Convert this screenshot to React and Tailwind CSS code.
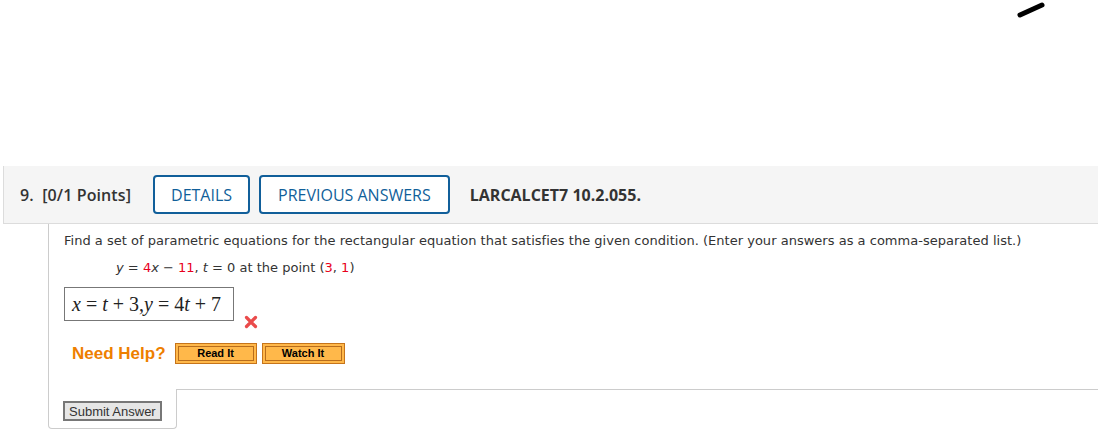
import React from 'react';

function RedX() {
    return (
        <svg width="14" height="14" viewBox="0 0 14 14" className="block">
            <path d="M2.5 2.5 L11.5 11.5 M11.5 2.5 L2.5 11.5" stroke="#ea4b4b" strokeWidth="3.2" strokeLinecap="round" />
        </svg>
    );
}

export default function App() {
    const red = 'text-[#e8001c]';
    return (
        <div className="relative w-[1098px] h-[439px] overflow-hidden bg-white">
            <svg className="absolute left-[1012px] top-0" width="40" height="22" viewBox="0 0 40 22">
                <path d="M8 15 L30 5" stroke="#000" strokeWidth="5" strokeLinecap="round" />
            </svg>

            <div className="h-[166px]"></div>

            <div className="ml-[3px] h-[58px] bg-[#f5f5f5] border-l border-b border-[#dcdcdc] flex items-center gap-[9px] pl-[16px] font-['Open_Sans',sans-serif] text-[16px]">
                <div className="font-semibold text-[#333] mr-[13px] whitespace-nowrap tracking-[0.1px]">
                    9.&nbsp; [0/1 Points]
                </div>
                <button className="h-[39px] px-[16px] border-2 border-[#115f9a] rounded-[4px] text-[#115f9a] bg-white font-medium">
                    DETAILS
                </button>
                <button className="h-[39px] px-[17px] border-2 border-[#115f9a] rounded-[4px] text-[#115f9a] bg-white font-medium">
                    PREVIOUS ANSWERS
                </button>
                <div className="ml-[11px] font-bold text-[#333] whitespace-nowrap">LARCALCET7 10.2.055.</div>
            </div>

            <div className="ml-[48px]">
                <div className="border-l border-[#cccccc] pl-[15px] pt-[9px] pb-[22px] font-['DejaVu_Sans',Verdana,sans-serif] text-[13px] text-[#333]">
                    <p className="leading-[16px] whitespace-nowrap tracking-[0.02px]">
                        Find a set of parametric equations for the rectangular equation that satisfies the given condition. (Enter your answers as a comma-separated list.)
                    </p>
                    <p className="mt-[11px] ml-[52px] leading-[16px] whitespace-nowrap">
                        <i>y</i> = <span className={red}>4</span><i>x</i> − <span className={red}>11</span>, <i>t</i> = 0 at the point (<span className={red}>3</span>, <span className={red}>1</span>)
                    </p>
                    <div className="mt-[11px] flex items-end gap-[10px]">
                        <div className="w-[170px] h-[34px] border border-[#777] flex items-center pl-[7px] font-['Liberation_Serif',serif] text-[20px] text-[#222] whitespace-nowrap">
                            <i>x</i><span className="mx-[5px]">=</span><i>t</i><span className="mx-[5px]">+</span>3,<i>y</i><span className="mx-[5px]">=</span>4<i>t</i><span className="mx-[5px]">+</span>7
                        </div>
                        <div className="mb-[-8px]"><RedX /></div>
                    </div>
                    <div className="mt-[20px] flex items-center ml-[8px] font-['Liberation_Sans',Arial,sans-serif]">
                        <span className="text-[#ee7f00] font-bold text-[17px] mr-[9px]">Need Help?</span>
                        <button className="w-[82px] h-[21px] border border-[#c6741a] bg-[#ffb84a] p-[2px] mr-[5px]">
                            <span className="block h-full border border-[#b86d1c] text-[11px] font-bold text-black leading-[13px]">Read It</span>
                        </button>
                        <button className="w-[83px] h-[21px] border border-[#c6741a] bg-[#ffb84a] p-[2px]">
                            <span className="block h-full border border-[#b86d1c] text-[11px] font-bold text-black leading-[13px]">Watch It</span>
                        </button>
                    </div>
                </div>
                <div className="flex">
                    <div className="w-[129px] h-[40px] border-l border-b border-r border-[#cccccc] rounded-b-[4px] pl-[14px] pt-[9px]">
                        <button className="h-[20px] px-[4px] border-2 border-[#777] bg-[#e6e6e6] font-['Liberation_Sans',Arial,sans-serif] text-[13px] text-[#333] leading-[15px] whitespace-nowrap">
                            Submit Answer
                        </button>
                    </div>
                    <div className="flex-1 border-t border-[#cccccc]"></div>
                </div>
            </div>
        </div>
    );
}
